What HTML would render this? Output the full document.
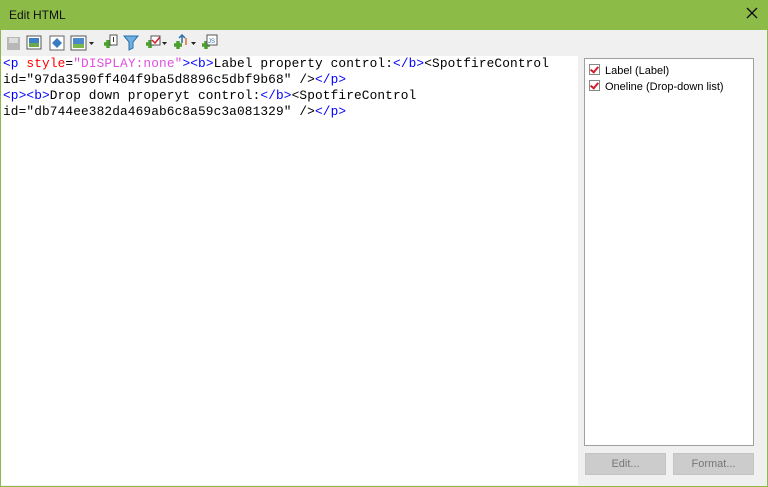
<!DOCTYPE html>
<html><head><style>
body{margin:0;width:768px;height:487px;overflow:hidden;font-family:"Liberation Sans",sans-serif;}
.win{position:absolute;left:0;top:0;width:766px;height:486px;border:1px solid #8bbb46;border-top:none;background:#f0f0f0;}
.title{position:absolute;left:0;top:0;width:768px;height:30px;background:#8cbc47;}
.title span{position:absolute;left:9px;top:8px;font-size:12px;color:#111;}
.x{position:absolute;right:9px;top:6px;}
.ed{position:absolute;left:1px;top:56px;width:577px;height:429px;background:#fff;}
.code{position:absolute;left:3px;top:56px;font-family:"Liberation Mono",monospace;font-size:12.8px;letter-spacing:0.12px;line-height:16px;white-space:pre;color:#000;}
.t{color:#0000ff}.a{color:#ff0000}.v{color:#e050e0}
.list{position:absolute;left:584px;top:58px;width:168px;height:386px;background:#fff;border:1px solid #a0a0a0;}
.it{position:absolute;left:4px;font-size:11px;color:#000;}
.cb{display:inline-block;width:9px;height:9px;border:1px solid #888;vertical-align:-1px;margin-right:5px;position:relative;background:#fff}
.cb:after{content:"";position:absolute;left:2px;top:0px;width:3px;height:6px;border:solid #d02030;border-width:0 2px 2px 0;transform:rotate(40deg)}
.btn{position:absolute;top:453px;width:79px;height:20px;background:#cccccc;border:1px solid #c4c4c4;font-size:11px;color:#777;text-align:center;line-height:20px;}
</style></head><body>
<div class="win"></div>
<div class="title"><span>Edit HTML</span>
<svg class="x" width="14" height="14"><path d="M2 2L12 12M12 2L2 12" stroke="#111" stroke-width="1.4"/></svg></div>
<svg style="position:absolute;left:0;top:30px" width="230" height="26">
<rect x="7" y="7" width="13" height="13" fill="#b8b8b8"/><rect x="9" y="8" width="9" height="5" fill="#ddd"/>
<rect x="27" y="6" width="14" height="13" fill="#fff" stroke="#555"/><rect x="29" y="8" width="10" height="9" fill="#3d7fc4"/><rect x="29" y="13" width="10" height="4" fill="#6aa84f"/>
<rect x="50" y="6" width="14" height="14" fill="#fff" stroke="#666"/><path d="M52 13l5-5 5 5-5 5z" fill="#3a7cc3"/>
<rect x="71" y="6" width="15" height="14" fill="#fff" stroke="#555"/><rect x="73" y="8" width="11" height="10" fill="#4a8acc"/><rect x="73" y="14" width="11" height="4" fill="#7ab648"/><path d="M89 12h5l-2.5 3z" fill="#222"/>
<path d="M104 14h8M108 10v8" stroke="#4aa02c" stroke-width="3.5"/><rect x="110" y="5" width="7" height="10" fill="#fff" stroke="#555"/><path d="M113.5 7v5" stroke="#333"/>
<path d="M124 6h14l-5 6v6l-4 2v-8z" fill="#6fb0e0" stroke="#2a6ea8"/>
<path d="M146 14h8M150 10v8" stroke="#4aa02c" stroke-width="3.5"/><rect x="151" y="6" width="9" height="9" fill="#fff" stroke="#555"/><path d="M152 10l3 3 5-6" stroke="#d02030" stroke-width="1.5" fill="none"/><path d="M162 12h5l-2.5 3z" fill="#222"/>
<path d="M174 15h8M178 11v8" stroke="#4aa02c" stroke-width="3.5"/><path d="M182 5v8M179 8l3-3 3 3" stroke="#2a6ea8" fill="none" stroke-width="1.5"/><path d="M186 8v7" stroke="#e07020" stroke-width="1.5"/><path d="M191 12h5l-2.5 3z" fill="#222"/>
<path d="M202 15h8M206 11v8" stroke="#4aa02c" stroke-width="3.5"/><rect x="207" y="5" width="10" height="10" fill="#fff" stroke="#555"/><text x="208" y="13" font-size="6" fill="#2a6ea8" font-family="Liberation Sans">JS</text>
</svg>
<div class="ed"></div>
<div class="code"><span class="t">&lt;p</span> <span class="a">style</span>=<span class="v">"DISPLAY:none"</span><span class="t">&gt;&lt;b&gt;</span>Label property control:<span class="t">&lt;/b&gt;</span>&lt;SpotfireControl
id="97da3590ff404f9ba5d8896c5dbf9b68" /&gt;<span class="t">&lt;/p&gt;</span>
<span class="t">&lt;p&gt;&lt;b&gt;</span>Drop down properyt control:<span class="t">&lt;/b&gt;</span>&lt;SpotfireControl
id="db744ee382da469ab6c8a59c3a081329" /&gt;<span class="t">&lt;/p&gt;</span></div>
<div class="list">
<div class="it" style="top:5px"><span class="cb"></span>Label (Label)</div>
<div class="it" style="top:21px"><span class="cb"></span>Oneline (Drop-down list)</div>
</div>
<div class="btn" style="left:585px">Edit...</div>
<div class="btn" style="left:673px">Format...</div>
</body></html>
